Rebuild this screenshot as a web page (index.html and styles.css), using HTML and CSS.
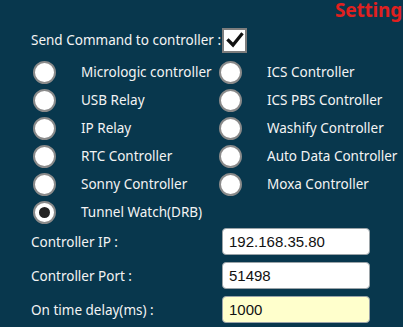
FILE: index.html
```html
<!DOCTYPE html>
<html>
<head>
<meta charset="utf-8">
<link rel="stylesheet" href="styles.css">
</head>
<body>
<div class="page">
  <div class="title">Setting</div>
  <div class="send-row">
    <span class="send-label">Send Command to controller :</span>
    <span class="checkbox">
      <svg width="20" height="20" viewBox="0 0 20 20"><path d="M3.5 10.5 L8 15 L16.5 4.5" fill="none" stroke="#111" stroke-width="3.2" stroke-linejoin="miter" stroke-linecap="square"/></svg>
    </span>
  </div>
  <div class="radios">
    <div class="ritem"><span class="radio"></span><span class="rlabel">Micrologic controller</span></div>
    <div class="ritem"><span class="radio"></span><span class="rlabel">ICS Controller</span></div>
    <div class="ritem"><span class="radio"></span><span class="rlabel">USB Relay</span></div>
    <div class="ritem"><span class="radio"></span><span class="rlabel">ICS PBS Controller</span></div>
    <div class="ritem"><span class="radio"></span><span class="rlabel">IP Relay</span></div>
    <div class="ritem"><span class="radio"></span><span class="rlabel">Washify Controller</span></div>
    <div class="ritem"><span class="radio"></span><span class="rlabel">RTC Controller</span></div>
    <div class="ritem"><span class="radio"></span><span class="rlabel">Auto Data Controller</span></div>
    <div class="ritem"><span class="radio"></span><span class="rlabel">Sonny Controller</span></div>
    <div class="ritem"><span class="radio"></span><span class="rlabel">Moxa Controller</span></div>
    <div class="ritem"><span class="radio checked"></span><span class="rlabel">Tunnel Watch(DRB)</span></div>
  </div>
  <div class="fields">
    <div class="field"><span class="flabel">Controller IP :</span><span class="input">192.168.35.80</span></div>
    <div class="field"><span class="flabel">Controller Port :</span><span class="input">51498</span></div>
    <div class="field"><span class="flabel">On time delay(ms) :</span><span class="input yellow">1000</span></div>
  </div>
</div>
</body>
</html>
```
FILE: styles.css
```css
html, body {
  margin: 0;
  padding: 0;
  background: #08374d;
}
.page {
  width: 403px;
  height: 327px;
  overflow: hidden;
  font-family: "Noto Sans", "Open Sans", sans-serif;
  color: #f4f4f4;
  font-size: 13.5px;
}
.title {
  height: 22px;
  line-height: 20px;
  text-align: right;
  padding-right: 1px;
  color: #e0201f;
  font-weight: bold;
  font-size: 19px;
  letter-spacing: -0.2px;
}
.send-row {
  display: flex;
  align-items: center;
  margin-top: 6px;
  padding-left: 31px;
  height: 24px;
}
.send-label {
  width: 191px;
  flex: none;
}
.checkbox {
  flex: none;
  width: 21px;
  height: 21px;
  border: 2px solid #7d7d7d;
  background: #fff;
  display: flex;
  align-items: center;
  justify-content: center;
}
.radios {
  margin-top: 6px;
  padding-left: 33px;
  display: grid;
  grid-template-columns: 186px 1fr;
  grid-auto-rows: 28px;
}
.ritem {
  display: flex;
  align-items: center;
}
.radio {
  box-sizing: border-box;
  width: 23px;
  height: 23px;
  border-radius: 50%;
  background: #fff;
  border: 2px solid #8a8a8a;
  display: flex;
  align-items: center;
  justify-content: center;
  margin-right: 25px;
  flex: none;
}
.radio.checked::after {
  content: "";
  width: 11px;
  height: 11px;
  border-radius: 50%;
  background: #222;
}
.fields {
  margin-top: 2px;
  padding-left: 31px;
  display: flex;
  flex-direction: column;
  gap: 7px;
}
.field {
  display: flex;
  align-items: center;
  height: 27px;
}
.flabel {
  width: 191px;
  flex: none;
}
.input {
  box-sizing: border-box;
  width: 148px;
  height: 27px;
  border: 1px solid #9aa3a8;
  border-radius: 4px;
  background: #fff;
  color: #111;
  font-family: "Liberation Sans", Arial, sans-serif;
  font-size: 15px;
  padding-left: 6px;
  display: flex;
  align-items: center;
}
.input.yellow {
  background: #ffffcc;
}
```
